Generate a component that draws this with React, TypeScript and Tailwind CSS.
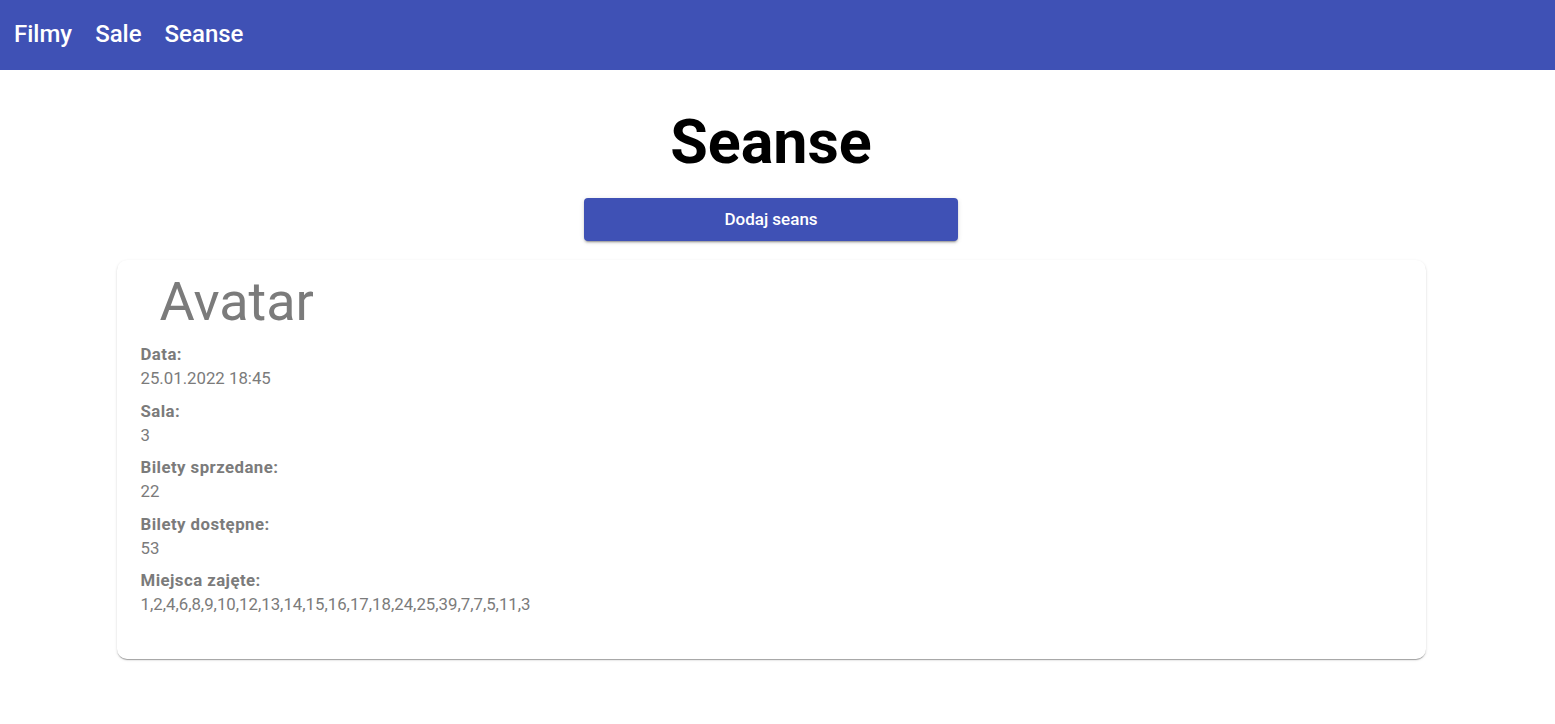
const nav = ['Filmy', 'Sale', 'Seanse'];

const fields = [
  { label: 'Data:', value: '25.01.2022 18:45' },
  { label: 'Sala:', value: '3' },
  { label: 'Bilety sprzedane:', value: '22' },
  { label: 'Bilety dostępne:', value: '53' },
  { label: 'Miejsca zajęte:', value: '1,2,4,6,8,9,10,12,13,14,15,16,17,18,24,25,39,7,7,5,11,3' },
];

export default function App() {
  return (
    <div className="min-h-screen bg-white font-['Roboto',sans-serif]">
      <header className="h-[70px] bg-[#3f51b5] flex items-center gap-[23px] px-[14px] pb-[3px]">
        {nav.map((item) => (
          <a key={item} className="text-white text-[24px] font-medium">
            {item}
          </a>
        ))}
      </header>

      <main className="w-[1542px] flex flex-col items-center">
        <h1 className="mt-[32px] text-[61px] font-bold leading-[80px] text-black">Seanse</h1>
        <button className="mt-[16px] w-[374px] h-[43px] rounded-[4px] bg-[#3f51b5] text-white text-[17px] font-medium shadow-[0_3px_1px_-2px_rgba(0,0,0,0.2),0_2px_2px_0_rgba(0,0,0,0.14),0_1px_5px_0_rgba(0,0,0,0.12)]">
          Dodaj seans
        </button>

        <section className="mt-[19px] w-[1309px] h-[399px] rounded-[10px] bg-white shadow-[0_2px_1px_-1px_rgba(0,0,0,0.2),0_1px_1px_0_rgba(0,0,0,0.14),0_1px_3px_0_rgba(0,0,0,0.12)] px-[24px] pt-[10px] text-[#7b7b7b]">
          <h2 className="pl-[19px] text-[54px] leading-[64px] font-normal">Avatar</h2>
          <div className="mt-[8px] flex flex-col gap-[8.5px]">
            {fields.map((f) => (
              <div key={f.label} className="text-[16.8px] leading-[24px]">
                <div className="font-bold tracking-[0.45px]">{f.label}</div>
                <div>{f.value}</div>
              </div>
            ))}
          </div>
        </section>
      </main>
    </div>
  );
}
